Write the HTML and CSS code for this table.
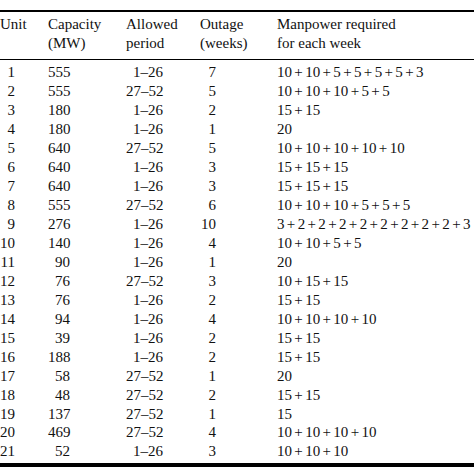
FILE: index.html
```html
<!DOCTYPE html>
<html>
<head>
<meta charset="utf-8">
<link rel="stylesheet" href="styles.css">
</head>
<body>
<div class="table">
  <div class="row head">
    <div>Unit</div>
    <div>Capacity<br>(MW)</div>
    <div>Allowed<br>period</div>
    <div>Outage<br>(weeks)</div>
    <div>Manpower required<br>for each week</div>
  </div>
  <div class="body">
    <div class="row"><span class="u">1</span><span class="cap">555</span><span class="per">1–26</span><span class="out">7</span><span class="man">10 + 10 + 5 + 5 + 5 + 5 + 3</span></div>
    <div class="row"><span class="u">2</span><span class="cap">555</span><span class="per">27–52</span><span class="out">5</span><span class="man">10 + 10 + 10 + 5 + 5</span></div>
    <div class="row"><span class="u">3</span><span class="cap">180</span><span class="per">1–26</span><span class="out">2</span><span class="man">15 + 15</span></div>
    <div class="row"><span class="u">4</span><span class="cap">180</span><span class="per">1–26</span><span class="out">1</span><span class="man">20</span></div>
    <div class="row"><span class="u">5</span><span class="cap">640</span><span class="per">27–52</span><span class="out">5</span><span class="man">10 + 10 + 10 + 10 + 10</span></div>
    <div class="row"><span class="u">6</span><span class="cap">640</span><span class="per">1–26</span><span class="out">3</span><span class="man">15 + 15 + 15</span></div>
    <div class="row"><span class="u">7</span><span class="cap">640</span><span class="per">1–26</span><span class="out">3</span><span class="man">15 + 15 + 15</span></div>
    <div class="row"><span class="u">8</span><span class="cap">555</span><span class="per">27–52</span><span class="out">6</span><span class="man">10 + 10 + 10 + 5 + 5 + 5</span></div>
    <div class="row"><span class="u">9</span><span class="cap">276</span><span class="per">1–26</span><span class="out">10</span><span class="man">3 + 2 + 2 + 2 + 2 + 2 + 2 + 2 + 2 + 3</span></div>
    <div class="row"><span class="u">10</span><span class="cap">140</span><span class="per">1–26</span><span class="out">4</span><span class="man">10 + 10 + 5 + 5</span></div>
    <div class="row"><span class="u">11</span><span class="cap">90</span><span class="per">1–26</span><span class="out">1</span><span class="man">20</span></div>
    <div class="row"><span class="u">12</span><span class="cap">76</span><span class="per">27–52</span><span class="out">3</span><span class="man">10 + 15 + 15</span></div>
    <div class="row"><span class="u">13</span><span class="cap">76</span><span class="per">1–26</span><span class="out">2</span><span class="man">15 + 15</span></div>
    <div class="row"><span class="u">14</span><span class="cap">94</span><span class="per">1–26</span><span class="out">4</span><span class="man">10 + 10 + 10 + 10</span></div>
    <div class="row"><span class="u">15</span><span class="cap">39</span><span class="per">1–26</span><span class="out">2</span><span class="man">15 + 15</span></div>
    <div class="row"><span class="u">16</span><span class="cap">188</span><span class="per">1–26</span><span class="out">2</span><span class="man">15 + 15</span></div>
    <div class="row"><span class="u">17</span><span class="cap">58</span><span class="per">27–52</span><span class="out">1</span><span class="man">20</span></div>
    <div class="row"><span class="u">18</span><span class="cap">48</span><span class="per">27–52</span><span class="out">2</span><span class="man">15 + 15</span></div>
    <div class="row"><span class="u">19</span><span class="cap">137</span><span class="per">27–52</span><span class="out">1</span><span class="man">15</span></div>
    <div class="row"><span class="u">20</span><span class="cap">469</span><span class="per">27–52</span><span class="out">4</span><span class="man">10 + 10 + 10 + 10</span></div>
    <div class="row"><span class="u">21</span><span class="cap">52</span><span class="per">1–26</span><span class="out">3</span><span class="man">10 + 10 + 10</span></div>
  </div>
</div>
</body>
</html>
```
FILE: styles.css
```css
html, body {
  margin: 0;
  padding: 0;
  background: #fff;
}
body {
  font-family: "Liberation Serif", "Times New Roman", serif;
  font-size: 15px;
  color: #111;
  overflow: hidden;
}
.table {
  padding-top: 10px;
  width: 474px;
}
.row {
  display: grid;
  grid-template-columns: 48px 78px 74px 77px 1fr;
  white-space: nowrap;
}
.head {
  border-top: 2px solid #000;
  border-bottom: 1px solid #000;
  padding-top: 3.2px;
  padding-bottom: 6.8px;
  line-height: 18.5px;
}
.body {
  padding-top: 3.4px;
  padding-bottom: 1.65px;
  border-bottom: 4px solid #000;
  line-height: 18.95px;
}
.u {
  width: 15px;
  text-align: right;
}
.cap {
  width: 22px;
  text-align: right;
}
.per {
  width: 37px;
  text-align: right;
}
.out {
  width: 16px;
  text-align: right;
}
.man {
  word-spacing: -1.4px;
}
```
